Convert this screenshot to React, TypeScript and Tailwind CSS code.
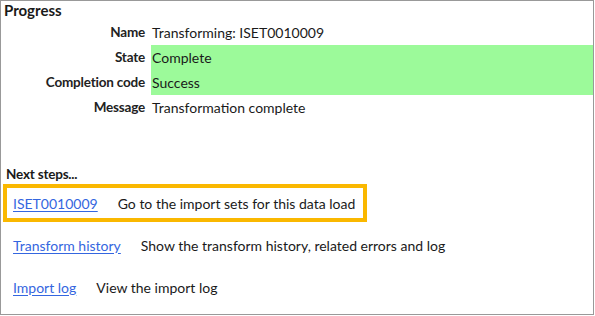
import React from 'react';

const rows: { label: string; value: string; ok?: boolean }[] = [
  { label: 'Name', value: 'Transforming: ISET0010009' },
  { label: 'State', value: 'Complete', ok: true },
  { label: 'Completion code', value: 'Success', ok: true },
  { label: 'Message', value: 'Transformation complete' },
];

const steps = [
  { link: 'ISET0010009', text: 'Go to the import sets for this data load', highlight: true },
  { link: 'Transform history', text: 'Show the transform history, related errors and log' },
  { link: 'Import log', text: 'View the import log' },
];

export default function App() {
  return (
    <div
      className="w-[594px] h-[315px] border border-[#999999] bg-white text-[#1a1a1a] text-[14px] overflow-hidden"
      style={{ fontFamily: 'Lato, "Open Sans", sans-serif' }}
    >
      <h2 className="font-bold text-[15px] pl-[3px] leading-[18px]">Progress</h2>

      <div className="mt-[1px] grid grid-cols-[144px_1fr] gap-x-[6px]">
        {rows.map((r) => (
          <React.Fragment key={r.label}>
            <div className="text-right font-bold text-[13.5px] tracking-[-0.2px] text-[#222] h-[25px] leading-[25px]">
              {r.label}
            </div>
            <div className={`h-[25px] leading-[25px] pl-[1px] ${r.ok ? 'bg-[#9cfa9a]' : ''}`}>{r.value}</div>
          </React.Fragment>
        ))}
      </div>

      <div className="mt-[45px] pl-[5px] font-bold text-[13.5px] tracking-[-0.2px] leading-[18px]">Next steps...</div>

      <div className="mt-[1px] flex flex-col pl-[2px]">
        {steps.map((s, i) => (
          <div
            key={s.link}
            className={`flex items-center gap-5 h-[38px] whitespace-nowrap ${
              s.highlight ? 'w-[364px] border-4 border-[#fab800] pl-[6px]' : 'pl-[10px]'
            } ${i > 0 ? 'mt-[4px]' : ''}`}
          >
            <a href="#" className="text-[#3466e0] underline underline-offset-2">
              {s.link}
            </a>
            <span>{s.text}</span>
          </div>
        ))}
      </div>
    </div>
  );
}
